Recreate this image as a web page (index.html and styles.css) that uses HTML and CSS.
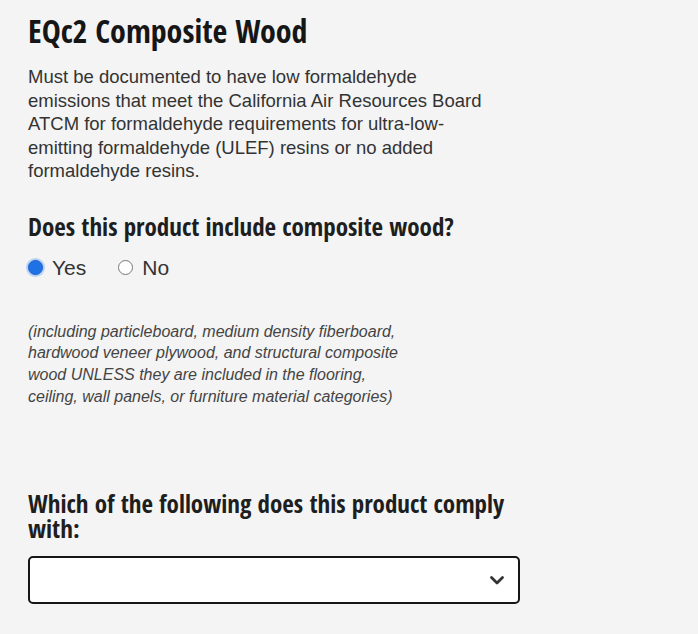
FILE: index.html
```html
<!DOCTYPE html>
<html lang="en">
<head>
<meta charset="utf-8">
<title>EQc2 Composite Wood</title>
<link rel="stylesheet" href="styles.css">
</head>
<body>
<main class="panel">
  <h2 class="title">EQc2 Composite Wood</h2>
  <p class="desc">Must be documented to have low formaldehyde emissions that meet the California Air Resources Board ATCM for formaldehyde requirements for ultra-low-emitting formaldehyde (ULEF) resins or no added formaldehyde resins.</p>

  <div class="field">
    <label class="question q-first">Does this product include composite wood?</label>
    <div class="radios">
      <label class="radio"><input type="radio" name="cw" checked><span>Yes</span></label>
      <label class="radio"><input type="radio" name="cw"><span>No</span></label>
    </div>
  </div>

  <p class="note">(including particleboard, medium density fiberboard, hardwood veneer plywood, and structural composite wood UNLESS they are included in the flooring, ceiling, wall panels, or furniture material categories)</p>

  <div class="field">
    <label class="question q-second" for="comply">Which of the following does this product comply with:</label>
    <div class="select-wrap">
      <select id="comply" class="select"><option></option></select>
      <svg class="chevron" viewBox="0 0 16 16" width="16" height="16" aria-hidden="true"><path d="M2.5 5.5 L8 11 L13.5 5.5" fill="none" stroke="#333" stroke-width="2.8" stroke-linecap="round" stroke-linejoin="round"/></svg>
    </div>
  </div>
</main>
</body>
</html>
```
FILE: styles.css
```css
html, body {
  margin: 0;
  padding: 0;
  background: #f4f4f4;
}

.panel {
  padding: 12px 0 0 28px;
  width: 492px;
  font-family: "Liberation Sans", Arial, sans-serif;
  color: #333;
}

.title {
  margin: 0;
  font-family: "Open Sans Condensed", "Open Sans", sans-serif;
  font-stretch: 75%;
  font-weight: 700;
  font-size: 32px;
  line-height: 38px;
  color: #161616;
}

.desc {
  margin: 15px 0 0;
  max-width: 465px;
  font-size: 18.5px;
  line-height: 23.5px;
  color: #333;
}

.field {
  display: flex;
  flex-direction: column;
}

.question {
  font-family: "Open Sans Condensed", "Open Sans", sans-serif;
  font-stretch: 75%;
  font-weight: 700;
  font-size: 25px;
  color: #1e1e1e;
}

.q-first {
  margin-top: 28px;
  line-height: 30px;
}

.radios {
  display: flex;
  gap: 32px;
  margin-top: 15px;
  font-size: 21px;
  line-height: 24px;
}

.radio {
  display: flex;
  align-items: center;
  gap: 9px;
}

.radio input {
  appearance: none;
  margin: 0;
  width: 15px;
  height: 15px;
  border-radius: 50%;
  border: 1px solid #777;
  background: #fff;
}

.radio input:checked {
  border-color: #1b5fcf;
  background: #1f72e6;
  box-shadow: 0 0 0 2px #b9d1f3;
}

.note {
  margin: 41px 0 0;
  max-width: 385px;
  font-style: italic;
  font-size: 16px;
  line-height: 21.7px;
  color: #444;
}

.q-second {
  margin-top: 84px;
  line-height: 25px;
}

.select-wrap {
  position: relative;
  margin-top: 15px;
  width: 492px;
}

.select {
  appearance: none;
  display: block;
  width: 100%;
  height: 48px;
  margin: 0;
  border: 2px solid #161616;
  border-radius: 5px;
  background: #fff;
  font-family: "Liberation Sans", Arial, sans-serif;
  font-size: 18px;
}

.chevron {
  position: absolute;
  right: 15px;
  top: 16px;
  pointer-events: none;
}
```
